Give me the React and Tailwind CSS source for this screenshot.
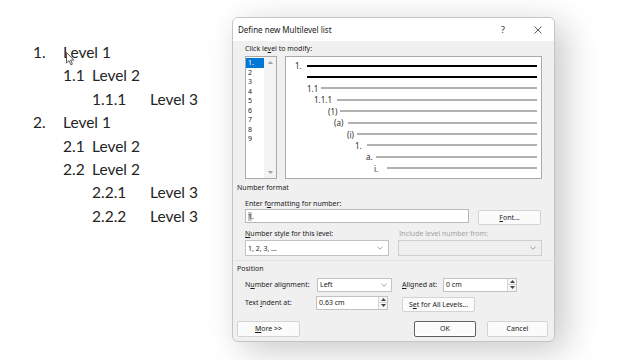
import React from "react";

function Chevron() {
  return (
    <svg width="6" height="4" viewBox="0 0 6 4" className="shrink-0">
      <path d="M0.5 0.8 L3 3.2 L5.5 0.8" fill="none" stroke="#8a8a8a" strokeWidth="0.8" />
    </svg>
  );
}

function Spin() {
  return (
    <div className="w-[9px] h-full flex flex-col border-l border-[#d4d4d4] bg-[#f7f7f7] shrink-0">
      <div className="flex-1 flex items-center justify-center border-b border-[#d4d4d4]">
        <svg width="5" height="3" viewBox="0 0 5 3"><path d="M0 3 L2.5 0 L5 3 Z" fill="#444" /></svg>
      </div>
      <div className="flex-1 flex items-center justify-center">
        <svg width="5" height="3" viewBox="0 0 5 3"><path d="M0 0 L2.5 3 L5 0 Z" fill="#444" /></svg>
      </div>
    </div>
  );
}

export default function App() {
  return (
    <div className="w-[640px] h-[360px] bg-white flex overflow-hidden">
      {/* Left document list */}
      <div className="w-[232px] shrink-0 pt-[41px] relative font-['Lato',sans-serif] text-[15.5px] text-[#242424]">
        <div className="h-[23.4px] flex items-center pl-[33px]"><span className="w-[30px]">1.</span><span>Level 1</span></div>
        <div className="h-[23.4px] flex items-center pl-[63px]"><span className="w-[29px]">1.1</span><span>Level 2</span></div>
        <div className="h-[23.4px] flex items-center pl-[92px]"><span className="w-[58px]">1.1.1</span><span>Level 3</span></div>
        <div className="h-[23.4px] flex items-center pl-[33px]"><span className="w-[30px]">2.</span><span>Level 1</span></div>
        <div className="h-[23.4px] flex items-center pl-[63px]"><span className="w-[29px]">2.1</span><span>Level 2</span></div>
        <div className="h-[23.4px] flex items-center pl-[63px]"><span className="w-[29px]">2.2</span><span>Level 2</span></div>
        <div className="h-[23.4px] flex items-center pl-[92px]"><span className="w-[58px]">2.2.1</span><span>Level 3</span></div>
        <div className="h-[23.4px] flex items-center pl-[92px]"><span className="w-[58px]">2.2.2</span><span>Level 3</span></div>
        <svg className="absolute left-[66px] top-[52px]" width="9" height="14" viewBox="0 0 9 14">
          <path d="M0.5 0.5 L0.5 11 L3 8.6 L4.9 12.8 L6.4 12.1 L4.6 8.1 L7.9 8.1 Z" fill="#fff" stroke="#333" strokeWidth="0.8" strokeLinejoin="round" />
        </svg>
      </div>

      {/* Dialog */}
      <div className="mt-[17px] w-[323px] h-[325px] shrink-0 rounded-[6px] bg-[#f0f0f0] border border-[#c4c4c4] shadow-[10px_8px_34px_rgba(0,0,0,0.22)] flex flex-col overflow-hidden font-['Noto_Sans',sans-serif] text-[7px] leading-[9px] text-[#1b1b1b]">
        {/* Title bar */}
        <div className="h-[23px] bg-white flex items-center pl-[5px] shrink-0">
          <span className="flex-1 text-[8px] text-[#1a1a1a]">Define new Multilevel list</span>
          <span className="text-[9px] text-[#333] mr-[29px]">?</span>
          <svg width="8" height="8" viewBox="0 0 8 8" className="mr-[12px]">
            <path d="M0.5 0.5 L7.5 7.5 M7.5 0.5 L0.5 7.5" stroke="#333" strokeWidth="0.8" />
          </svg>
        </div>

        {/* Body */}
        <div className="flex flex-col px-[12px]">
          <div className="mt-[3px] h-[9px]">Click le<u>v</u>el to modify:</div>
          <div className="mt-[3px] h-[123px] flex">
            {/* list box */}
            <div className="w-[32px] h-full flex border border-[#a9a9a9] bg-white">
              <div className="w-[18px] flex flex-col pt-[1px]">
                <div className="h-[9.5px] bg-[#0078d7] text-white pl-[2px] flex items-center">1.</div>
                <div className="h-[9.5px] pl-[2px] flex items-center">2</div>
                <div className="h-[9.5px] pl-[2px] flex items-center">3</div>
                <div className="h-[9.5px] pl-[2px] flex items-center">4</div>
                <div className="h-[9.5px] pl-[2px] flex items-center">5</div>
                <div className="h-[9.5px] pl-[2px] flex items-center">6</div>
                <div className="h-[9.5px] pl-[2px] flex items-center">7</div>
                <div className="h-[9.5px] pl-[2px] flex items-center">8</div>
                <div className="h-[9.5px] pl-[2px] flex items-center">9</div>
              </div>
              <div className="flex-1 bg-[#f3f3f3] flex flex-col items-center justify-between py-[4px]">
                <svg width="5" height="3" viewBox="0 0 5 3"><path d="M0 3 L2.5 0 L5 3 Z" fill="#a0a0a0" /></svg>
                <svg width="5" height="3" viewBox="0 0 5 3"><path d="M0 0 L2.5 3 L5 0 Z" fill="#a0a0a0" /></svg>
              </div>
            </div>
            {/* preview */}
            <div className="ml-[8px] flex-1 h-full border border-[#a9a9a9] bg-white flex flex-col pt-[3px] pr-[4px] text-[8px] text-[#2a2a2a]">
              <div className="h-[11.4px] flex items-center pl-[9px]"><span className="w-[12px]">1.</span><div className="flex-1 h-[2px] bg-black" /></div>
              <div className="h-[11.4px] flex items-center pl-[21px]"><div className="flex-1 h-[2px] bg-black" /></div>
              <div className="h-[11.4px] flex items-center pl-[21px]"><span className="w-[14px]">1.1</span><div className="flex-1 h-[2px] bg-[#b1b1b1]" /></div>
              <div className="h-[11.4px] flex items-center pl-[28px]"><span className="w-[23px]">1.1.1</span><div className="flex-1 h-[2px] bg-[#b1b1b1]" /></div>
              <div className="h-[11.4px] flex items-center pl-[42px]"><span className="w-[12px]">(1)</span><div className="flex-1 h-[2px] bg-[#b1b1b1]" /></div>
              <div className="h-[11.4px] flex items-center pl-[48px]"><span className="w-[14px]">(a)</span><div className="flex-1 h-[2px] bg-[#b1b1b1]" /></div>
              <div className="h-[11.4px] flex items-center pl-[61px]"><span className="w-[10px]">(i)</span><div className="flex-1 h-[2px] bg-[#b1b1b1]" /></div>
              <div className="h-[11.4px] flex items-center pl-[69px]"><span className="w-[12px]">1.</span><div className="flex-1 h-[2px] bg-[#b1b1b1]" /></div>
              <div className="h-[11.4px] flex items-center pl-[80px]"><span className="w-[10px]">a.</span><div className="flex-1 h-[2px] bg-[#b1b1b1]" /></div>
              <div className="h-[11.4px] flex items-center pl-[88px]"><span className="w-[13px]">i.</span><div className="flex-1 h-[2px] bg-[#b1b1b1]" /></div>
            </div>
          </div>

          <div className="mt-[3.5px] h-[9px] -ml-[8px]">Number format</div>
          <div className="mt-[7px] h-[9px]">Enter f<u>o</u>rmatting for number:</div>
          <div className="mt-[1.5px] flex items-start gap-[9px] h-[15px]">
            <div className="w-[224px] h-[14px] bg-white border border-[#b9b9b9] flex items-center pl-[2px]">
              <span className="bg-[#c8c8c8]">1</span><span>.</span>
            </div>
            <div className="w-[63px] h-[15px] mt-[1px] bg-[#fbfbfb] border border-[#d3d3d3] rounded-[2px] flex items-center justify-center">
              <span><u>F</u>ont...</span>
            </div>
          </div>

          <div className="mt-[4.5px] h-[9px] grid grid-cols-2 gap-[9px]">
            <span><u>N</u>umber style for this level:</span>
            <span className="text-[#a3a3a3] pl-[1px]">Include level number from:</span>
          </div>
          <div className="mt-[2.5px] h-[16px] grid grid-cols-2 gap-[9px]">
            <div className="bg-white border border-[#c2c2c2] flex items-center pl-[2px] pr-[5px]">
              <span className="flex-1">1, 2, 3, ...</span>
              <Chevron />
            </div>
            <div className="bg-[#efefef] border border-[#cfcfcf] flex items-center justify-end pr-[5px]">
              <Chevron />
            </div>
          </div>

          <div className="mt-[4px] -mx-[11px] h-px bg-[#e2e2e2]" />
          <div className="mt-[3px] h-[9px] -ml-[8px]">Position</div>

          <div className="mt-[4.5px] h-[14px] flex items-center">
            <span className="w-[72px]">N<u>u</u>mber alignment:</span>
            <div className="w-[75px] h-full bg-white border border-[#c2c2c2] flex items-center pl-[2px] pr-[4px]">
              <span className="flex-1">Left</span>
              <Chevron />
            </div>
            <span className="ml-[10px] w-[41px]"><u>A</u>ligned at:</span>
            <div className="w-[74px] h-full bg-white border border-[#c2c2c2] flex items-center">
              <span className="flex-1 pl-[2px]">0 cm</span>
              <Spin />
            </div>
          </div>

          <div className="mt-[4px] h-[15px] flex items-start">
            <div className="w-[71px] h-[14px] flex items-center"><span>Text <u>i</u>ndent at:</span></div>
            <div className="w-[72px] h-[14px] bg-white border border-[#c2c2c2] flex items-center">
              <span className="flex-1 pl-[2px]">0.63 cm</span>
              <Spin />
            </div>
            <div className="ml-[14px] w-[73px] h-[15px] mt-[1px] bg-[#fbfbfb] border border-[#d3d3d3] rounded-[2px] flex items-center justify-center">
              <span>S<u>e</u>t for All Levels...</span>
            </div>
          </div>

          <div className="mt-[10px] -ml-[8px] -mr-[6px] h-[16px] flex items-center">
            <div className="w-[63px] h-full bg-[#fbfbfb] border border-[#d3d3d3] rounded-[2px] flex items-center justify-center">
              <span><u>M</u>ore &gt;&gt;</span>
            </div>
            <div className="ml-auto w-[62px] h-full bg-[#fbfbfb] border border-[#5f5f5f] rounded-[2px] flex items-center justify-center shadow-[inset_0_0_0_1px_#ffffff]">
              <span>OK</span>
            </div>
            <div className="ml-[11px] w-[61px] h-full bg-[#fbfbfb] border border-[#d3d3d3] rounded-[2px] flex items-center justify-center">
              <span>Cancel</span>
            </div>
          </div>
        </div>
      </div>
    </div>
  );
}
